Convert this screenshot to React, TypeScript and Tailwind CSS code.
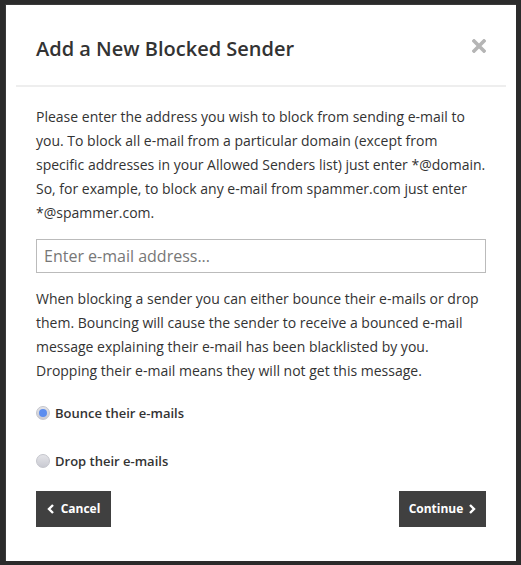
import React, { useState } from 'react';

function Radio({ checked }: { checked: boolean }) {
    return (
        <span className="w-[14px] h-[14px] rounded-full bg-gradient-to-b from-[#e4e4e8] to-[#c9cad2] border border-[#c4c5cc] flex items-center justify-center shrink-0">
            {checked && <span className="w-[8px] h-[8px] rounded-full bg-[#5b8def]" />}
        </span>
    );
}

export default function App() {
    const [mode, setMode] = useState<'bounce' | 'drop'>('bounce');

    return (
        <div className="w-[521px] h-[565px] bg-[#2b2b2b] pt-[4px] pl-[5px] pr-[5px] pb-[4px] font-['Open_Sans',sans-serif] text-[#333]">
            <div className="bg-white h-full border-t border-l border-[#3a3a3a] flex flex-col">
                {/* Header */}
                <div className="mx-[10px] h-[82px] border-b-2 border-[#eeeeee] flex items-center justify-between pl-[20px] pr-[20px] pt-[8px]">
                    <h2 className="text-[20px] font-semibold text-[#333]">Add a New Blocked Sender</h2>
                    <svg width="14" height="14" viewBox="0 0 14 14" className="mt-[-6px]">
                        <path d="M2 2 L12 12 M12 2 L2 12" stroke="#b5b5b5" strokeWidth="3.6" strokeLinecap="square" />
                    </svg>
                </div>

                {/* Body */}
                <div className="px-[30px] pt-[18px] text-[14px] leading-[24px]">
                    <p className="mr-[-3px]">
                        Please enter the address you wish to block from sending e-mail to you. To block all e-mail from a particular domain (except from specific addresses in your Allowed Senders list) just enter *@domain. So, for example, to block any e-mail from spammer.com just enter *@spammer.com.
                    </p>

                    <input
                        type="text"
                        placeholder="Enter e-mail address..."
                        className="mt-[14px] w-full h-[34px] border border-[#bbbbbb] px-[7px] text-[16px] placeholder:text-[#777] outline-none"
                    />

                    <p className="mt-[14px]">
                        When blocking a sender you can either bounce their e-mails or drop them. Bouncing will cause the sender to receive a bounced e-mail message explaining their e-mail has been blacklisted by you. Dropping their e-mail means they will not get this message.
                    </p>

                    <div className="mt-[18px] flex flex-col gap-[24px]">
                        <label className="flex items-center gap-[5px] text-[13px] font-semibold cursor-pointer" onClick={() => setMode('bounce')}>
                            <Radio checked={mode === 'bounce'} />
                            Bounce their e-mails
                        </label>
                        <label className="flex items-center gap-[5px] text-[13px] font-semibold cursor-pointer" onClick={() => setMode('drop')}>
                            <Radio checked={mode === 'drop'} />
                            Drop their e-mails
                        </label>
                    </div>

                    <div className="mt-[18px] flex justify-between">
                        <button className="h-[36px] w-[75px] bg-[#404040] text-white text-[12px] font-bold flex items-center justify-center gap-[6px]">
                            <svg width="8" height="10" viewBox="0 0 8 10">
                                <path d="M6 1 L2 5 L6 9" stroke="white" strokeWidth="2.4" fill="none" />
                            </svg>
                            Cancel
                        </button>
                        <button className="h-[36px] w-[87px] bg-[#404040] text-white text-[12px] font-bold flex items-center justify-center gap-[5px]">
                            Continue
                            <svg width="8" height="10" viewBox="0 0 8 10">
                                <path d="M2 1 L6 5 L2 9" stroke="white" strokeWidth="2.4" fill="none" />
                            </svg>
                        </button>
                    </div>
                </div>
            </div>
        </div>
    );
}
